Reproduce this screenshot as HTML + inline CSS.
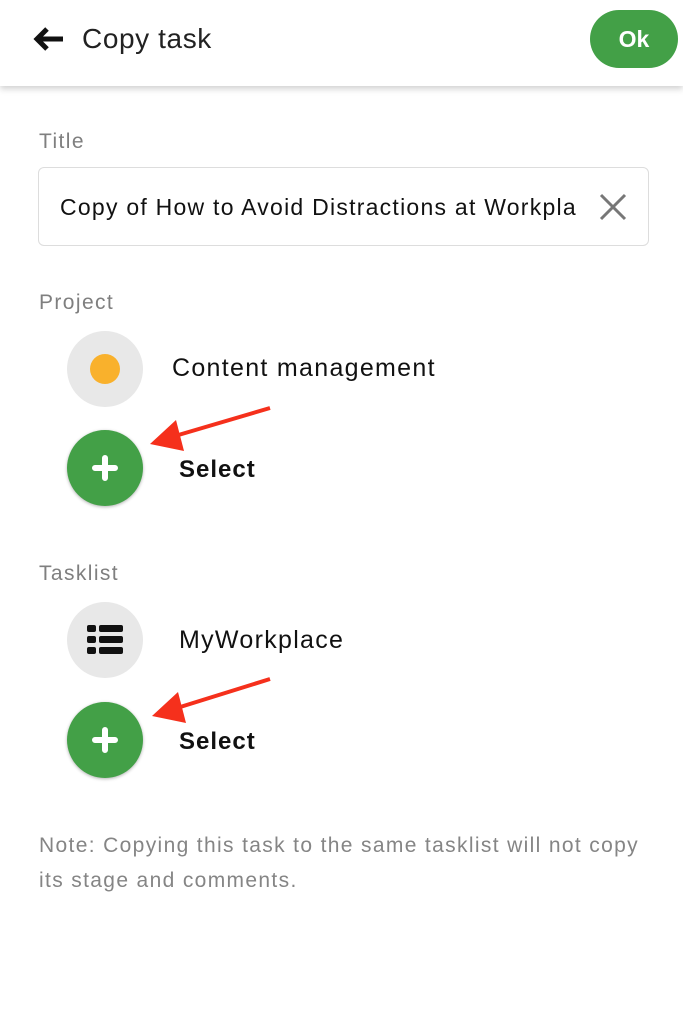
<!DOCTYPE html>
<html><head><meta charset="utf-8"><style>
body{margin:0;width:683px;height:1024px;background:#fff;font-family:"Liberation Sans",sans-serif;position:relative;overflow:hidden}
.a{position:absolute;white-space:nowrap;line-height:1}
.hdr{position:absolute;left:0;top:0;width:683px;height:86px;background:#fff;box-shadow:0 3px 6px rgba(0,0,0,.18)}
.lbl{color:#7f7f7f;font-size:21px;letter-spacing:1.4px}
.c{position:absolute;width:76px;height:76px;border-radius:50%}
.g{background:#e8e8e8}
.gr{background:#43a047;box-shadow:0 1px 3px rgba(0,0,0,.3)}
.sel{font-weight:bold;font-size:24px;color:#111;letter-spacing:1px}
</style></head><body>
<div class="hdr"></div>
<svg class="a" style="left:33px;top:26px" width="32" height="26" viewBox="0 0 32 26"><path d="M14 3 L4 13 L14 23 M4 13 H30" stroke="#111" stroke-width="5" fill="none" stroke-linejoin="miter"/></svg>
<div class="a" style="left:82px;top:25px;font-size:28px;color:#222;letter-spacing:0.6px">Copy task</div>
<div class="a" style="left:590px;top:10px;width:88px;height:58px;border-radius:29px;background:#43a047;color:#fff;font-size:23px;font-weight:bold;text-align:center;line-height:58px">Ok</div>
<div class="a lbl" style="left:39px;top:131px">Title</div>
<div class="a" style="left:38px;top:167px;width:609px;height:77px;border:1.5px solid #ddd;border-radius:6px"></div>
<div class="a" style="left:60px;top:196px;font-size:23px;color:#111;letter-spacing:1.25px">Copy of How to Avoid Distractions at Workpla</div>
<svg class="a" style="left:598px;top:192px" width="30" height="30" viewBox="0 0 30 30"><path d="M3 3 L27 27 M27 3 L3 27" stroke="#777" stroke-width="3"/></svg>
<div class="a lbl" style="left:39px;top:292px">Project</div>
<div class="c g" style="left:67px;top:331px"></div>
<div class="a" style="left:90px;top:354px;width:30px;height:30px;border-radius:50%;background:#f9b12c"></div>
<div class="a" style="left:172px;top:356px;font-size:25px;color:#111;letter-spacing:1.3px">Content management</div>
<div class="c gr" style="left:67px;top:430px"></div>
<svg class="a" style="left:67px;top:430px" width="76" height="76"><path d="M38 28 V48 M28 38 H48" stroke="#fff" stroke-width="6" stroke-linecap="round"/></svg>
<div class="a sel" style="left:179px;top:458px">Select</div>
<svg class="a" style="left:0;top:0" width="683" height="1024">
<path d="M270 408 L175 436" stroke="#f5301c" stroke-width="4"/><path d="M150 444 L176 420 L184 451 Z" fill="#f5301c"/>
<path d="M270 679 L177 708" stroke="#f5301c" stroke-width="4"/><path d="M152 716 L178 692 L186 723 Z" fill="#f5301c"/>
</svg>
<div class="a lbl" style="left:39px;top:563px">Tasklist</div>
<div class="c g" style="left:67px;top:602px"></div>
<svg class="a" style="left:87px;top:625px" width="36" height="30" viewBox="0 0 36 30"><rect x="0" y="0" width="9" height="7" rx="2" fill="#111"/><rect x="12" y="0" width="24" height="7" rx="2" fill="#111"/><rect x="0" y="11" width="9" height="7" rx="2" fill="#111"/><rect x="12" y="11" width="24" height="7" rx="2" fill="#111"/><rect x="0" y="22" width="9" height="7" rx="2" fill="#111"/><rect x="12" y="22" width="24" height="7" rx="2" fill="#111"/></svg>
<div class="a" style="left:179px;top:628px;font-size:25px;color:#111;letter-spacing:1.3px">MyWorkplace</div>
<div class="c gr" style="left:67px;top:702px"></div>
<svg class="a" style="left:67px;top:702px" width="76" height="76"><path d="M38 28 V48 M28 38 H48" stroke="#fff" stroke-width="6" stroke-linecap="round"/></svg>
<div class="a sel" style="left:179px;top:730px">Select</div>
<div class="a" style="left:39px;top:828px;font-size:21px;color:#858585;line-height:35px;white-space:nowrap;letter-spacing:1.35px">Note: Copying this task to the same tasklist will not copy<br>its stage and comments.</div>
</body></html>
